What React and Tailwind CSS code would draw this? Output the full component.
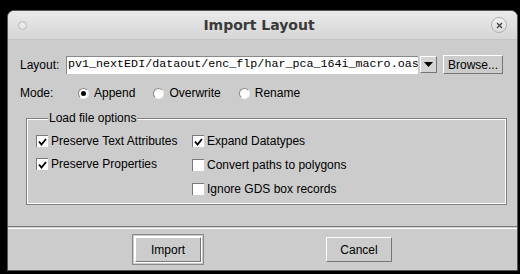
import React from 'react';

const ui = { fontFamily: '"Liberation Sans", Arial, sans-serif' };
const mono = { fontFamily: '"Liberation Mono", "Courier New", monospace' };

function Radio({ checked, label }) {
  return (
    <div className="flex items-center">
      <div className="w-[11px] h-[11px] rounded-full bg-white border border-t-[#888] border-l-[#888] border-r-[#eee] border-b-[#eee] flex items-center justify-center">
        {checked && <div className="w-[5px] h-[5px] rounded-full bg-black" />}
      </div>
      <span className="ml-[5px]">{label}</span>
    </div>
  );
}

function Check({ checked, label }) {
  return (
    <div className="flex items-center h-[16px]">
      <div className="w-[12px] h-[12px] bg-white border-t border-l border-[#7a7a7a] flex items-center justify-center">
        {checked && (
          <svg width="9" height="8" viewBox="0 0 9 8">
            <path d="M1 3.5 L3.5 6.5 L8 1" stroke="#000" strokeWidth="1.8" fill="none" />
          </svg>
        )}
      </div>
      <span className="ml-[3px]">{label}</span>
    </div>
  );
}

export default function App() {
  return (
    <div className="w-[520px] h-[274px] bg-black pt-[10px] pl-[7px] pr-[2px] pb-[3px] overflow-hidden" style={ui}>
      <div className="h-full flex flex-col rounded-t-[7px] border border-[#555] bg-[#cccccc] overflow-hidden">
        {/* Title bar */}
        <div className="h-[29px] flex items-center px-[10px] bg-gradient-to-b from-[#eaeaea] to-[#d6d6d6] border-b border-[#c4c4c4]">
          <div className="w-[9px] h-[9px] rounded-full bg-[#e8e8e8] border border-[#b8b8b8]" />
          <div className="flex-1 text-center text-[14px] font-bold text-[#3a3a3a]" style={{ fontFamily: '"DejaVu Sans", sans-serif' }}>
            Import Layout
          </div>
          <div className="w-[16px] h-[16px] rounded-full border border-[#b0b0b0] bg-gradient-to-b from-[#f2f2f2] to-[#dcdcdc] flex items-center justify-center">
            <svg width="7" height="7" viewBox="0 0 7 7">
              <path d="M1 1 L6 6 M6 1 L1 6" stroke="#444" strokeWidth="1.3" />
            </svg>
          </div>
        </div>

        {/* Content */}
        <div className="flex-1 flex flex-col text-[12px] text-black">
          <div className="flex items-center pl-[12px] mt-[15px]">
            <span className="w-[46px]">Layout:</span>
            <div className="w-[352px] h-[18px] bg-white border-t border-l border-[#888] flex items-center pl-[1px] text-[11.7px] overflow-hidden whitespace-nowrap" style={mono}>
              pv1_nextEDI/dataout/enc_flp/har_pca_164i_macro.oas
            </div>
            <div className="ml-[2px] w-[17px] h-[17px] bg-[#d4d4d4] border border-t-white border-l-white border-r-[#777] border-b-[#777] flex items-center justify-center">
              <svg width="9" height="5" viewBox="0 0 9 5">
                <path d="M0 0 L9 0 L4.5 5 Z" fill="#000" />
              </svg>
            </div>
            <div className="ml-[6px] w-[60px] h-[19px] border border-t-white border-l-white border-r-[#777] border-b-[#777] flex items-center justify-center">
              Browse...
            </div>
          </div>

          <div className="flex items-center pl-[12px] mt-[10px] h-[18px]">
            <span className="w-[58px]">Mode:</span>
            <Radio checked label="Append" />
            <div className="ml-[18px]"><Radio label="Overwrite" /></div>
            <div className="ml-[18px]"><Radio label="Rename" /></div>
          </div>

          {/* Group box */}
          <div className="relative ml-[18px] mr-[10px] mt-[16px] h-[87px] border border-[#808080]">
            <div className="h-full border border-white pt-[13px] pl-[8px]">
              <div className="flex">
                <div className="w-[156px] flex flex-col gap-[7px]">
                  <Check checked label="Preserve Text Attributes" />
                  <Check checked label="Preserve Properties" />
                </div>
                <div className="flex flex-col gap-[8px]">
                  <Check checked label="Expand Datatypes" />
                  <Check label="Convert paths to polygons" />
                  <Check label="Ignore GDS box records" />
                </div>
              </div>
            </div>
            <div className="absolute left-[21px] top-[-9px] px-[1px] bg-[#cccccc] leading-[16px]">Load file options</div>
          </div>

          <div className="mt-[21px] border-t border-[#7a7a7a]" />
          <div className="mt-[1px] border-t border-white" />

          <div className="flex mt-[5px]">
            <div className="ml-[124px] w-[72px] h-[31px] border border-[#888] flex items-center justify-center">
              <div className="w-[68px] h-[27px] border border-white flex items-center justify-center">
                <div className="w-[66px] h-[25px] border border-t-white border-l-white border-r-[#777] border-b-[#777] flex items-center justify-center">
                  Import
                </div>
              </div>
            </div>
            <div className="ml-[122px] mt-[3px] w-[66px] h-[25px] border border-t-white border-l-white border-r-[#777] border-b-[#777] flex items-center justify-center">
              Cancel
            </div>
          </div>
        </div>
      </div>
    </div>
  );
}
